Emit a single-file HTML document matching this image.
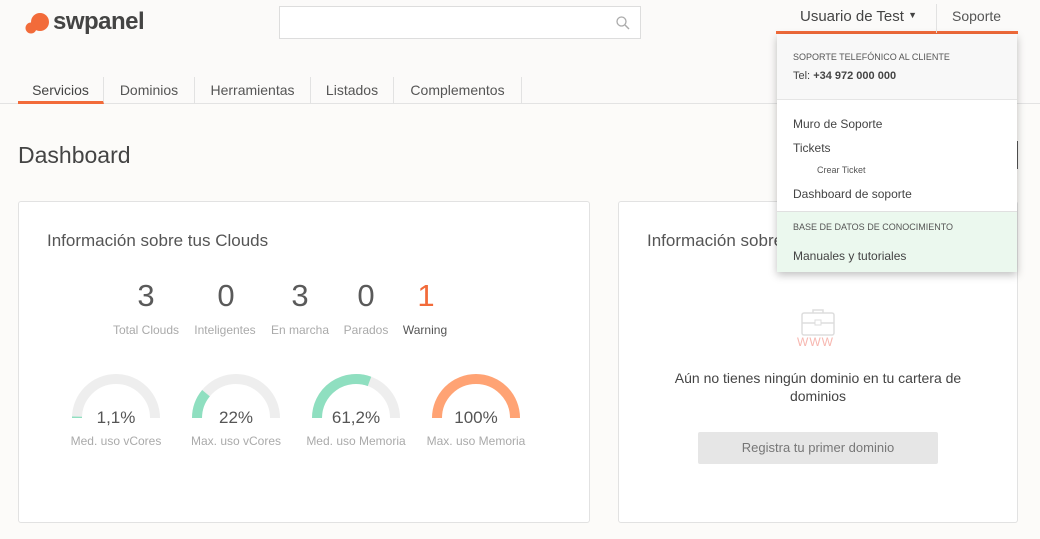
<!DOCTYPE html><html><head><meta charset="utf-8"><style>
*{margin:0;padding:0;box-sizing:border-box}
body{width:1040px;height:539px;overflow:hidden;background:#fcfbf9;font-family:"Liberation Sans",sans-serif;color:#444;position:relative}
.a{position:absolute;white-space:nowrap}
.hdr{position:absolute;left:0;top:0;width:1040px;height:104px;border-bottom:1px solid #e3e3e3;background:#fbfaf9}
.tab{position:absolute;top:77px;height:27px;font-size:14px;color:#555;text-align:center;line-height:26px;border-right:1px solid #e2e2e2}
.card{position:absolute;background:#fff;border:1px solid #e2e2e2;border-radius:3px}
.num{position:absolute;font-size:31px;color:#5a5a5a;width:80px;text-align:center;top:278px}
.lab{position:absolute;font-size:12px;color:#aaa;width:90px;text-align:center;top:323px}
.g{position:absolute;top:370px}
.gl{position:absolute;font-size:12px;color:#aaa;width:130px;text-align:center;top:434px}
.gv{position:absolute;font-size:17px;color:#555;width:100px;text-align:center;top:408px}
.dd{position:absolute;left:777px;top:34px;width:240px;height:238px;background:#fff;box-shadow:0 3px 8px rgba(0,0,0,.25)}
</style></head><body>
<div class="hdr"></div>
<svg class="a" style="left:25px;top:10px" width="26" height="26" viewBox="0 0 26 26"><circle cx="15" cy="12" r="9" fill="#f26b3a"/><circle cx="6" cy="18" r="5.5" fill="#f26b3a"/></svg>
<div class="a" style="left:53px;top:8px;font-size:24px;font-weight:bold;color:#444;letter-spacing:-0.5px">swpanel</div>
<div class="a" style="left:279px;top:6px;width:362px;height:33px;background:#fff;border:1px solid #ddd"></div>
<svg class="a" style="left:615px;top:15px" width="16" height="16" viewBox="0 0 16 16"><circle cx="6.5" cy="6.5" r="4.5" fill="none" stroke="#aaa" stroke-width="1.3"/><path d="M10 10l4 4" stroke="#aaa" stroke-width="1.4"/></svg>
<div class="tab" style="left:18px;width:86px;color:#444;border-bottom:3px solid #f26b3a;border-right:1px solid #e2e2e2">Servicios</div>
<div class="tab" style="left:104px;width:91px">Dominios</div>
<div class="tab" style="left:195px;width:116px">Herramientas</div>
<div class="tab" style="left:311px;width:83px">Listados</div>
<div class="tab" style="left:394px;width:128px">Complementos</div>
<div class="a" style="left:776px;top:4px;width:242px;height:30px;border-bottom:3px solid #f26b3a"></div>
<div class="a" style="left:800px;top:8px;font-size:15px;color:#444">Usuario de Test <span style="font-size:9px;vertical-align:3px">▼</span></div>
<div class="a" style="left:936px;top:4px;width:1px;height:29px;background:#e2e2e2"></div>
<div class="a" style="left:952px;top:8px;font-size:14px;color:#555">Soporte</div>
<div class="a" style="left:18px;top:142px;font-size:23px;color:#444">Dashboard</div>
<div class="card" style="left:18px;top:201px;width:572px;height:322px"></div>
<div class="card" style="left:618px;top:201px;width:400px;height:322px"></div>
<div class="a" style="left:47px;top:231px;font-size:17px;color:#555">Información sobre tus Clouds</div>
<div class="a" style="left:647px;top:231px;font-size:17px;color:#555">Información sobre</div>
<div class="num" style="left:106px">3</div><div class="num" style="left:186px">0</div><div class="num" style="left:260px">3</div><div class="num" style="left:326px">0</div><div class="num" style="left:386px;color:#f26b3a">1</div>
<div class="lab" style="left:101px">Total Clouds</div><div class="lab" style="left:180px">Inteligentes</div><div class="lab" style="left:255px">En marcha</div><div class="lab" style="left:321px">Parados</div><div class="lab" style="left:380px;color:#555">Warning</div>
<svg class="g" style="left:66px" width="100" height="50" viewBox="0 0 100 50"><path d="M11 48A39 39 0 0 1 89 48" fill="none" stroke="#eee" stroke-width="10"/><path d="M11 48A39 39 0 0 1 11.02 46.6" fill="none" stroke="#8fdfc0" stroke-width="10"/></svg>
<svg class="g" style="left:186px" width="100" height="50" viewBox="0 0 100 50"><path d="M11 48A39 39 0 0 1 89 48" fill="none" stroke="#eee" stroke-width="10"/><path d="M11 48A39 39 0 0 1 20 23.2" fill="none" stroke="#8fdfc0" stroke-width="10"/></svg>
<svg class="g" style="left:306px" width="100" height="50" viewBox="0 0 100 50"><path d="M11 48A39 39 0 0 1 89 48" fill="none" stroke="#eee" stroke-width="10"/><path d="M11 48A39 39 0 0 1 63.5 11.4" fill="none" stroke="#8fdfc0" stroke-width="10"/></svg>
<svg class="g" style="left:426px" width="100" height="50" viewBox="0 0 100 50"><path d="M11 48A39 39 0 0 1 89 48" fill="none" stroke="#ffa374" stroke-width="10"/></svg>
<div class="gv" style="left:66px">1,1%</div><div class="gv" style="left:186px">22%</div><div class="gv" style="left:306px">61,2%</div><div class="gv" style="left:426px">100%</div>
<div class="gl" style="left:51px">Med. uso vCores</div><div class="gl" style="left:171px">Max. uso vCores</div><div class="gl" style="left:291px">Med. uso Memoria</div><div class="gl" style="left:411px">Max. uso Memoria</div>
<svg class="a" style="left:801px;top:308px" width="36" height="28" viewBox="0 0 36 28"><rect x="1" y="5" width="32" height="22" rx="2" fill="none" stroke="#ddd" stroke-width="1.5"/><path d="M12 5V2h10v3M1 15h32" stroke="#ddd" stroke-width="1.5" fill="none"/><rect x="14" y="12" width="6" height="5" fill="#fff" stroke="#ddd"/></svg>
<div class="a" style="left:797px;top:335px;font-size:12px;color:#f7b7b0;letter-spacing:1px">WWW</div>
<div class="a" style="left:618px;top:369px;width:400px;text-align:center;font-size:14px;color:#444;white-space:normal;line-height:18px;padding:0 48px">Aún no tienes ningún dominio en tu cartera de dominios</div>
<div class="a" style="left:698px;top:432px;width:240px;height:32px;background:#e6e6e6;border-radius:2px;text-align:center;line-height:32px;font-size:13px;color:#777">Registra tu primer dominio</div>
<div class="a" style="left:1016px;top:141px;width:2px;height:28px;background:#555"></div>
<div class="dd">
<div style="position:absolute;left:0;top:0;width:240px;height:66px;background:#f8f8f8;border-bottom:1px solid #e5e5e5"></div>
<div class="a" style="left:16px;top:18px;font-size:9px;color:#555">SOPORTE TELEFÓNICO AL CLIENTE</div>
<div class="a" style="left:16px;top:36px;font-size:11px;color:#444">Tel: <b>+34 972 000 000</b></div>
<div class="a" style="left:16px;top:83px;font-size:12px;color:#444">Muro de Soporte</div>
<div class="a" style="left:16px;top:107px;font-size:12px;color:#444">Tickets</div>
<div class="a" style="left:40px;top:131px;font-size:9px;color:#555">Crear Ticket</div>
<div class="a" style="left:16px;top:153px;font-size:12px;color:#444">Dashboard de soporte</div>
<div style="position:absolute;left:0;top:177px;width:240px;height:61px;background:#ebf8ee;border-top:1px solid #e0e0e0"></div>
<div class="a" style="left:16px;top:188px;font-size:9px;color:#555">BASE DE DATOS DE CONOCIMIENTO</div>
<div class="a" style="left:16px;top:215px;font-size:12px;color:#444">Manuales y tutoriales</div>
</div>
</body></html>
